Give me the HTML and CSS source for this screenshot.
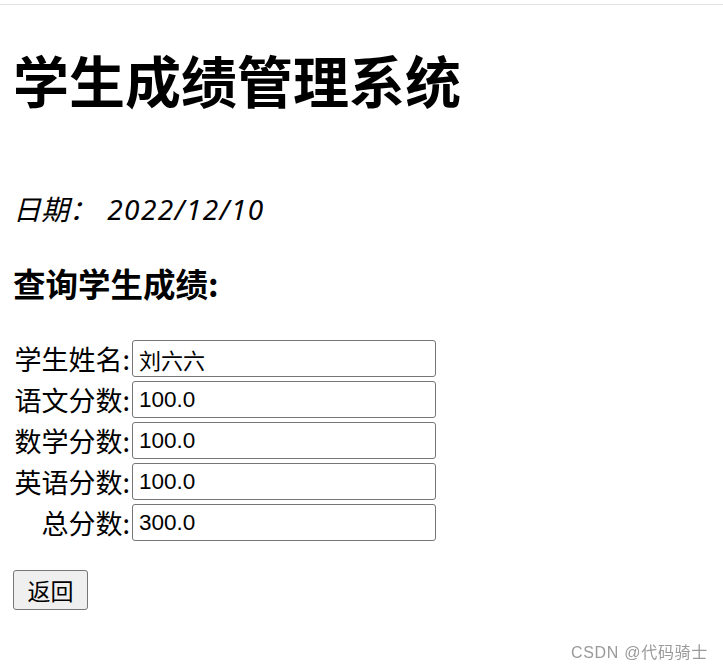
FILE: index.html
```html
<!DOCTYPE html>
<html lang="zh-CN">
<head>
    <meta charset="UTF-8">
    <title>学生成绩管理系统</title>
    <link rel="stylesheet" href="styles.css">
</head>
<body>
    <div class="topline"></div>
    <h1>学生成绩管理系统</h1>
    <p class="date">日期： <span class="date-value">2022/12/10</span></p>
    <h3>查询学生成绩:</h3>
    <form class="score-form">
        <label for="name">学生姓名:</label>
        <input id="name" type="text" value="刘六六" class="cjk">
        <label for="chinese">语文分数:</label>
        <input id="chinese" type="text" value="100.0">
        <label for="math">数学分数:</label>
        <input id="math" type="text" value="100.0">
        <label for="english">英语分数:</label>
        <input id="english" type="text" value="100.0">
        <label for="total">总分数:</label>
        <input id="total" type="text" value="300.0">
    </form>
    <button type="button" class="back">返回</button>
    <div class="watermark">CSDN @代码骑士</div>
</body>
</html>
```

FILE: styles.css
```css
body {
    font-family: "Noto Sans", "Noto Sans CJK SC", sans-serif;
    margin: 0;
    padding: 0 13px;
    background-color: #fff;
    color: #000;
}
.topline {
    height: 4px;
    margin: 0 -13px;
    border-bottom: 1px solid #e3e3e3;
}
h1 {
    font-family: "Noto Sans CJK SC", sans-serif;
    font-size: 56px;
    font-weight: bold;
    line-height: 74px;
    margin: 37px 0 0;
}
.date {
    font-size: 28px;
    font-style: italic;
    line-height: 40px;
    margin: 73px 0 0;
}
.date-value {
    margin-left: 3px;
    letter-spacing: 1.4px;
}
h3 {
    font-family: "Noto Sans CJK SC", sans-serif;
    font-size: 32.5px;
    font-weight: bold;
    line-height: 40px;
    margin: 34px 0 0;
}
.score-form {
    display: grid;
    grid-template-columns: 117px 304px;
    column-gap: 2px;
    row-gap: 4px;
    margin-top: 37px;
}
.score-form label {
    font-family: "Noto Sans CJK SC", sans-serif;
    font-size: 27px;
    line-height: 37px;
    text-align: right;
    white-space: nowrap;
}
.score-form input {
    height: 37px;
    box-sizing: border-box;
    margin: 0;
    padding: 0 6px;
    border: 1px solid #767676;
    border-radius: 3px;
    font-family: "Liberation Sans", Arial, sans-serif;
    font-size: 22.5px;
    color: #000;
}
.score-form input.cjk {
    font-family: "Liberation Sans", "Noto Sans CJK SC", sans-serif;
    font-size: 22px;
}
.back {
    display: block;
    margin-top: 29px;
    width: 75px;
    height: 40px;
    padding: 0;
    border: 1px solid #767676;
    border-radius: 3px;
    background-color: #efefef;
    font-family: "Noto Sans CJK SC", sans-serif;
    font-size: 23px;
    color: #000;
}
.watermark {
    position: fixed;
    right: 15px;
    bottom: 8px;
    font-family: "Liberation Sans", "Noto Sans CJK SC", sans-serif;
    font-size: 16px;
    letter-spacing: 0.7px;
    color: #9a9a9a;
}
```
